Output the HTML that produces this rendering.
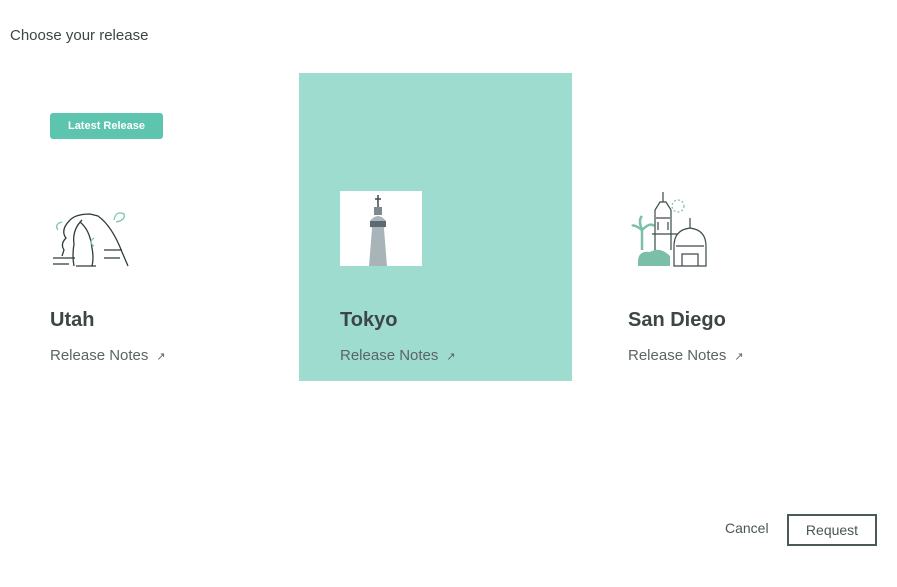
<!DOCTYPE html>
<html><head><style>
body{margin:0;width:897px;height:587px;background:#fff;font-family:"Liberation Sans",sans-serif;color:#3f4a4a;position:relative;overflow:hidden}
.a{position:absolute}
.t{font-size:20px;font-weight:bold;color:#3d4646}
.rn{font-size:15px;color:#5b6464}
.rn span{font-size:11px;margin-left:8px}
</style></head><body>
<div class="a" style="left:10px;top:27px;font-size:15px;color:#3d4646">Choose your release</div>
<div class="a" style="left:299px;top:73px;width:273px;height:308px;background:#9fdcd0"></div>
<div class="a" style="left:50px;top:113px;width:113px;height:26px;background:#5dc4ae;border-radius:3px;color:#fff;font-size:11px;font-weight:bold;text-align:center;line-height:26px">Latest Release</div>
<svg class="a" style="left:50px;top:208px" width="80" height="60" fill="none" stroke="#2e3c3c" stroke-width="1.3">
<path d="M20 12 Q26 6 40 6 L48 8 Q62 18 72 44 L78 58"/><path d="M32 12 Q22 22 24 36 Q22 48 24 58"/><path d="M20 12 Q10 22 16 30 Q10 36 14 42 L12 48"/><path d="M30 14 Q40 22 42 40 Q44 50 42 58"/><path d="M54 42h18M54 50h16M3 50h22M3 56h16M26 58h20"/>
<path d="M12 14 Q4 16 8 22" stroke="#7cc4b2"/><path d="M64 12 Q66 2 74 6 Q76 12 66 14" stroke="#7cc4b2"/><path d="M44 30 Q38 34 44 38" stroke="#7cc4b2"/></svg>
<div class="a" style="left:340px;top:191px;width:82px;height:75px;background:#fff"></div>
<svg class="a" style="left:340px;top:191px" width="82" height="75"><path d="M38 4v12M35 8h6" stroke="#3a4a52" stroke-width="1.5"/><path d="M34 16h8v8h-8z" fill="#7b8a90"/><path d="M30 30 Q38 20 46 30 L44 38 L47 75 H29 L32 38Z" fill="#a8b4b8"/><path d="M30 30h16v6H30z" fill="#5a6a70"/></svg>
<svg class="a" style="left:630px;top:190px" width="80" height="78" fill="none" stroke="#3a4a4a" stroke-width="1.2">
<path d="M8 72 Q8 60 20 62 Q30 56 40 66 L40 76 H8Z" fill="#7cbfa8" stroke="none"/><path d="M12 60 V40 M12 40 Q4 34 2 36 M12 40 Q20 32 24 36 M12 40 Q8 30 12 26" stroke="#7cbfa8" stroke-width="2.5"/>
<path d="M25 60 V20 L30 12 L36 12 L41 20 V60 M33 12V2 M22 44h26M26 28h14M28 32v8M38 32v8"/><path d="M44 76 V56 Q44 40 60 38 Q76 40 76 56 V76 Z M60 38 V28 M52 76 V64 H68 V76 M46 56 H74"/>
<circle cx="48" cy="16" r="6" stroke="#7cbfa8" stroke-dasharray="2 2"/></svg>
<div class="a t" style="left:50px;top:309px">Utah</div>
<div class="a t" style="left:340px;top:309px">Tokyo</div>
<div class="a t" style="left:628px;top:309px">San Diego</div>
<div class="a rn" style="left:50px;top:347px">Release Notes<span>↗</span></div>
<div class="a rn" style="left:340px;top:347px">Release Notes<span>↗</span></div>
<div class="a rn" style="left:628px;top:347px">Release Notes<span>↗</span></div>
<div class="a" style="left:725px;top:520px;font-size:14px;color:#4a5656">Cancel</div>
<div class="a" style="left:787px;top:514px;width:86px;height:28px;border:2px solid #4a5a58;font-size:14px;color:#4a5656;text-align:center;line-height:28px">Request</div>
</body></html>
